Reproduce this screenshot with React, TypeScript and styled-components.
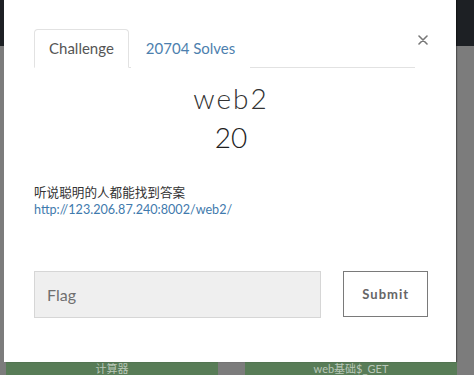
import styled, { createGlobalStyle } from "styled-components";

const GlobalStyle = createGlobalStyle`
  body {
    margin: 0;
    background: #7c7c7c;
    font-family: Lato, "Noto Sans CJK SC", sans-serif;
  }
`;

const Page = styled.div`
  position: relative;
  width: 474px;
  height: 375px;
  overflow: hidden;
  background: #7c7c7c;
`;

const NavBar = styled.div`
  height: 46px;
  background: #1d2024;
`;

const Board = styled.div`
  display: grid;
  grid-template-columns: 212px 212px;
  column-gap: 27px;
  padding: 316px 0 0 6px;
`;

const Card = styled.div`
  height: 60px;
  background: #587c57;
  color: #b9c7b8;
  font-size: 11px;
  line-height: 12px;
  text-align: center;
  padding-top: 1px;
  box-sizing: border-box;
`;

const Modal = styled.div`
  position: absolute;
  top: 0;
  left: 4px;
  width: 452px;
  height: 362px;
  background: #fff;
  box-shadow: 1px 0 1px rgba(0, 0, 0, 0.35);
  padding: 29px 28px 0 30px;
  box-sizing: border-box;
`;

const Header = styled.div`
  display: flex;
  align-items: flex-start;
`;

const Tabs = styled.div`
  flex: 1;
  display: flex;
  border-bottom: 1px solid #e2e2e2;
`;

const Tab = styled.div<{ active?: boolean }>`
  padding: 8px 14px 8px 14px;
  margin-bottom: -1px;
  font-size: 15px;
  line-height: 21px;
  color: ${(p) => (p.active ? "#555" : "#4d7fae")};
  background: #fff;
  border: 1px solid ${(p) => (p.active ? "#e2e2e2" : "transparent")};
  border-bottom-color: ${(p) => (p.active ? "#fff" : "transparent")};
  border-radius: 4px 4px 0 0;
  margin-right: 2px;
`;

const Close = styled.button`
  width: 13px;
  padding: 0;
  margin: 6px 0 0 0;
  border: none;
  background: transparent;
  display: flex;
  justify-content: flex-end;
  cursor: pointer;
`;

const Title = styled.div`
  margin-top: 11px;
  text-align: center;
  font-size: 28px;
  line-height: 39px;
  font-weight: 300;
  color: #333;
  letter-spacing: 2px;
`;

const Value = styled.div`
  text-align: center;
  font-size: 28px;
  line-height: 39px;
  font-weight: 300;
  color: #1e1e1e;
`;

const Description = styled.div`
  margin-top: 27px;
  font-size: 12.6px;
  line-height: 17px;
  color: #333;
  a {
    color: #3f7aad;
    text-decoration: none;
  }
`;

const FlagRow = styled.div`
  display: flex;
  gap: 22px;
  margin-top: 53px;
  align-items: flex-start;
`;

const FlagInput = styled.input`
  width: 289px;
  height: 47px;
  box-sizing: border-box;
  background: #efefef;
  border: 1px solid #d6d6d6;
  padding: 0 12px;
  font-family: Lato, sans-serif;
  font-size: 16px;
  color: #555;
  &::placeholder {
    color: #6f6f6f;
  }
`;

const SubmitButton = styled.button`
  width: 85px;
  height: 46px;
  box-sizing: border-box;
  background: #fff;
  border: 1px solid #7a7a7a;
  font-family: Lato, sans-serif;
  font-weight: 700;
  font-size: 13px;
  letter-spacing: 1px;
  color: #666;
`;

export default function App() {
  return (
    <>
      <GlobalStyle />
      <Page>
        <NavBar />
        <Board>
          <Card>计算器</Card>
          <Card>web基础$_GET</Card>
        </Board>
        <Modal>
          <Header>
            <Tabs>
              <Tab active>Challenge</Tab>
              <Tab>20704 Solves</Tab>
            </Tabs>
            <Close aria-label="close">
              <svg width="10" height="10" viewBox="0 0 10 10">
                <path
                  d="M1 1L9 9M9 1L1 9"
                  stroke="#777"
                  strokeWidth="1.6"
                  strokeLinecap="round"
                />
              </svg>
            </Close>
          </Header>
          <Title>web2</Title>
          <Value>20</Value>
          <Description>
            听说聪明的人都能找到答案
            <br />
            <a href="#">http://123.206.87.240:8002/web2/</a>
          </Description>
          <FlagRow>
            <FlagInput placeholder="Flag" />
            <SubmitButton>Submit</SubmitButton>
          </FlagRow>
        </Modal>
      </Page>
    </>
  );
}
